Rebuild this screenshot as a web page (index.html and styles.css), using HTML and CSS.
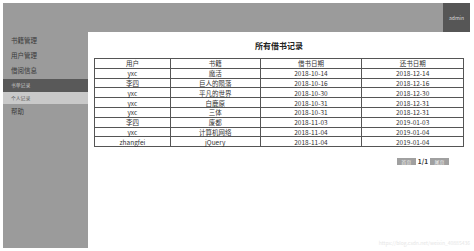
FILE: index.html
```html
<!DOCTYPE html>
<html>
<head>
<meta charset="utf-8">
<link rel="stylesheet" href="styles.css">
</head>
<body>
<div class="app">
  <header class="topbar">
    <div class="spacer"></div>
    <div class="user">admin</div>
  </header>
  <div class="main">
    <nav class="sidebar">
      <div class="item">书籍管理</div>
      <div class="item">用户管理</div>
      <div class="item">借阅信息</div>
      <div class="sub dark">书单记录</div>
      <div class="sub light">个人记录</div>
      <div class="item">帮助</div>
    </nav>
    <section class="content">
      <h1 class="title">所有借书记录</h1>
      <table class="records">
        <colgroup><col class="c1"><col class="c2"><col class="c3"><col class="c4"></colgroup>
        <tr><td>用户</td><td>书籍</td><td>借书日期</td><td>还书日期</td></tr>
        <tr><td>yxc</td><td>魔活</td><td>2018-10-14</td><td>2018-12-14</td></tr>
        <tr><td>李四</td><td>巨人的陨落</td><td>2018-10-16</td><td>2018-12-16</td></tr>
        <tr><td>yxc</td><td>平凡的世界</td><td>2018-10-30</td><td>2018-12-30</td></tr>
        <tr><td>yxc</td><td>白鹿原</td><td>2018-10-31</td><td>2018-12-31</td></tr>
        <tr><td>yxc</td><td>三体</td><td>2018-10-31</td><td>2018-12-31</td></tr>
        <tr><td>李四</td><td>废都</td><td>2018-11-03</td><td>2019-01-03</td></tr>
        <tr><td>yxc</td><td>计算机网络</td><td>2018-11-04</td><td>2019-01-04</td></tr>
        <tr><td>zhangfei</td><td>jQuery</td><td>2018-11-04</td><td>2019-01-04</td></tr>
      </table>
      <div class="pager">
        <span class="btn">首页</span>
        <span class="count">1/1</span>
        <span class="btn">尾页</span>
      </div>
      <div class="watermark">https://blog.csdn.net/weixin_40885436</div>
    </section>
  </div>
</div>
</body>
</html>
```
FILE: styles.css
```css
html, body {
  margin: 0;
  padding: 0;
  background: #fff;
}
body {
  padding: 3px 4px 3px 3px;
  font-family: "Noto Sans CJK SC", "Liberation Sans", sans-serif;
  color: #333;
}
.app {
  display: flex;
  flex-direction: column;
  height: 245px;
}
.topbar {
  display: flex;
  height: 29px;
  background: #9b9b9b;
}
.spacer { flex: 1; }
.user {
  width: 27px;
  background: #565656;
  color: #ddd;
  font-size: 5px;
  display: flex;
  align-items: center;
  justify-content: center;
}
.main {
  flex: 1;
  display: flex;
}
.sidebar {
  width: 85px;
  background: #9b9b9b;
  padding-top: 1px;
  display: flex;
  flex-direction: column;
}
.item {
  height: 15px;
  line-height: 15px;
  font-size: 6.5px;
  padding-left: 8px;
  color: #3a3a3a;
}
.sub {
  height: 12.5px;
  line-height: 12.5px;
  font-size: 4.8px;
  padding-left: 8px;
}
.sub.dark { background: #595959; color: #ccc; margin-top: 1px; }
.sub.light { background: #c9c9c9; color: #555; }
.content {
  flex: 1;
  background: #fff;
  padding: 0 6px;
  position: relative;
}
.title {
  margin: 8px 0 0;
  height: 18px;
  line-height: 12px;
  font-size: 8px;
  font-weight: bold;
  text-align: center;
  color: #222;
}
.records {
  width: 370px;
  border-collapse: collapse;
  font-size: 6.5px;
  color: #333;
}
.c1 { width: 76px; }
.c2 { width: 90px; }
.c3 { width: 102px; }
.c4 { width: 102px; }
.records td {
  border: 1px solid #555;
  padding: 0;
  height: 8.8px;
  line-height: 8px;
  text-align: center;
}
.pager {
  margin-top: 9px;
  padding-right: 15px;
  display: flex;
  justify-content: flex-end;
  align-items: center;
  gap: 2px;
}
.btn {
  background: #a0a0a0;
  color: #eee;
  font-size: 5px;
  height: 7px;
  line-height: 7px;
  width: 19px;
  text-align: center;
}
.count {
  font-size: 6.5px;
  font-weight: bold;
  color: #333;
}
.watermark {
  position: absolute;
  right: 0;
  bottom: 2px;
  font-size: 5px;
  color: #e6e6e6;
}
```
